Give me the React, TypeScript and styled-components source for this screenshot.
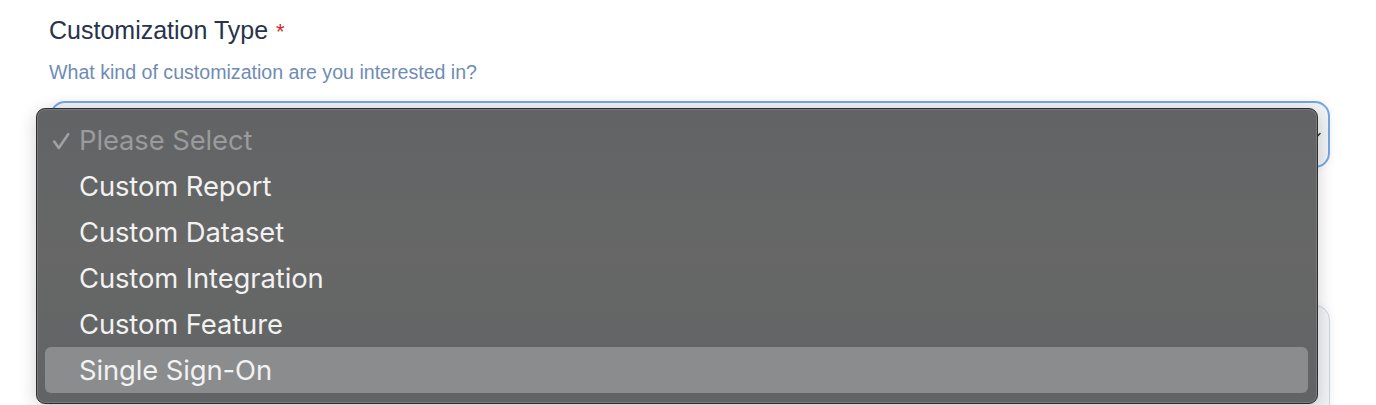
import React from "react";
import styled, { createGlobalStyle } from "styled-components";

const Global = createGlobalStyle`
  html, body { margin: 0; padding: 0; background: #ffffff; }
  body { width: 1376px; height: 405px; overflow: hidden; }
`;

const Page = styled.div`
  position: relative;
  width: 1376px;
  height: 405px;
  overflow: hidden;
  box-sizing: border-box;
  padding: 14px 46px 0 49px;
  font-family: "Liberation Sans", Arial, sans-serif;
`;

const Label = styled.div`
  font-size: 25px;
  line-height: 32px;
  color: #27344a;
  display: flex;
  gap: 8px;
  align-items: baseline;
`;

const Star = styled.span`
  color: #d42a2a;
  font-size: 22px;
`;

const Hint = styled.div`
  margin-top: 12px;
  font-size: 19.6px;
  line-height: 24px;
  color: #6e8cb6;
`;

const SelectBox = styled.div<{ $focused?: boolean }>`
  margin-top: 17px;
  margin-left: 1px;
  height: 67px;
  box-sizing: border-box;
  border-radius: 15px;
  border: ${(p) => (p.$focused ? "2px solid #74a5e4" : "1.5px solid #c9d4e4")};
  background: #f1f2f4;
  box-shadow: 0 0 10px rgba(0, 0, 0, 0.06);
  display: flex;
  align-items: center;
  justify-content: flex-end;
  padding-right: 6px;
`;

const Chevron = styled.svg`
  width: 12px;
  height: 12px;
`;

const SecondBox = styled(SelectBox)`
  margin-top: 137px;
  height: 140px;
  align-items: flex-end;
`;

const Menu = styled.div`
  position: absolute;
  left: 36px;
  top: 108px;
  width: 1282px;
  height: 296px;
  box-sizing: border-box;
  border-radius: 9px;
  border: 1px solid #2e2e30;
  box-shadow: inset 0 0 0 1px #7a7a7c, 0 4px 18px rgba(0, 0, 0, 0.18);
  background: linear-gradient(180deg, #626365 0%, #666766 50%, #626365 100%);
  padding: 8px 9px 10px 8px;
  display: flex;
  flex-direction: column;
  font-family: Inter, "Noto Sans", sans-serif;
`;

const Item = styled.div<{ $active?: boolean; $muted?: boolean }>`
  height: 46px;
  flex: 0 0 46px;
  display: flex;
  align-items: center;
  position: relative;
  border-radius: 6px;
  padding-left: 34px;
  font-size: 27.4px;
  letter-spacing: -0.1px;
  color: ${(p) => (p.$muted ? "#9a9b9c" : "#f2f2f2")};
  background: ${(p) => (p.$active ? "#8b8c8e" : "transparent")};
`;

const Check = styled.svg`
  position: absolute;
  left: 7px;
  top: 15px;
  width: 18px;
  height: 18px;
`;

const options = [
  "Custom Report",
  "Custom Dataset",
  "Custom Integration",
  "Custom Feature",
  "Single Sign-On",
];

export default function App() {
  return (
    <>
      <Global />
      <Page>
        <Label>
          Customization Type <Star>*</Star>
        </Label>
        <Hint>What kind of customization are you interested in?</Hint>
        <SelectBox $focused>
          <Chevron viewBox="0 0 12 12">
            <path d="M2 4.5 L6 8.5 L10 4.5" fill="none" stroke="#2b3648" strokeWidth="1.6" strokeLinecap="round" />
          </Chevron>
        </SelectBox>
        <SecondBox>
          <Chevron viewBox="0 0 12 12">
            <path d="M3 10 L10 3" fill="none" stroke="#555" strokeWidth="1.2" />
          </Chevron>
        </SecondBox>
        <Menu>
          <Item $muted>
            <Check viewBox="0 0 18 18">
              <path d="M2.2 9.6 L6.8 16 L16.2 2.2" fill="none" stroke="#a0a1a2" strokeWidth="2.6" strokeLinecap="round" strokeLinejoin="round" />
            </Check>
            Please Select
          </Item>
          {options.map((o, i) => (
            <Item key={o} $active={i === options.length - 1}>
              {o}
            </Item>
          ))}
        </Menu>
      </Page>
    </>
  );
}
